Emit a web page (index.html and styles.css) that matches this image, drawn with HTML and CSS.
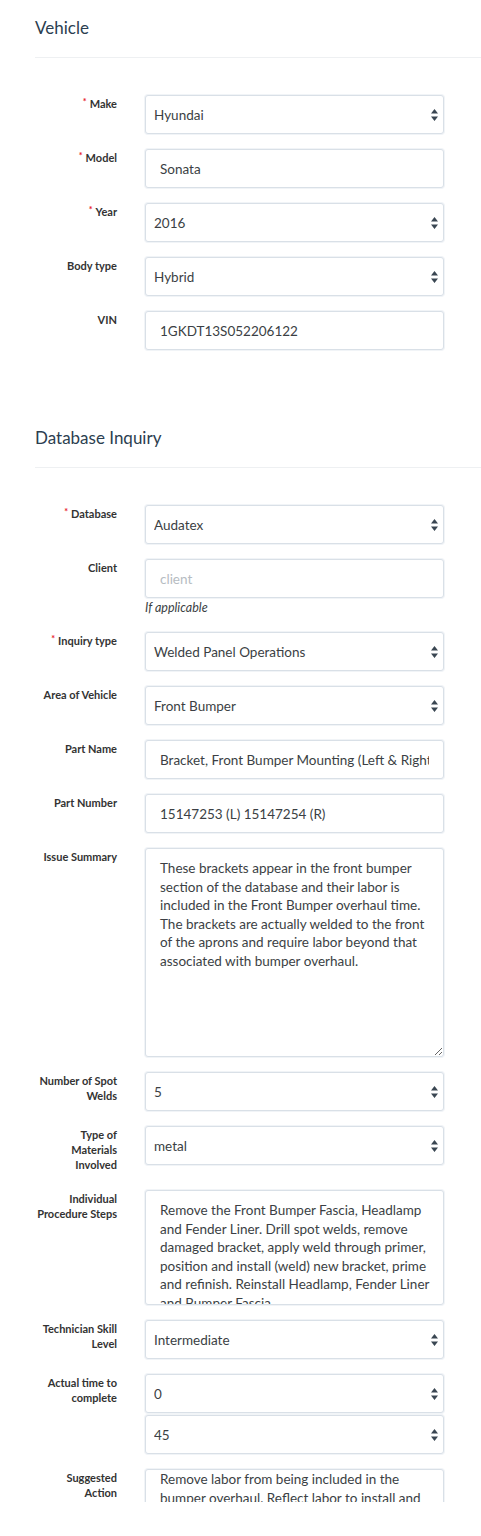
FILE: index.html
```html
<!DOCTYPE html>
<html lang="en">
<head>
    <meta charset="UTF-8">
    <meta name="viewport" content="width=device-width, initial-scale=1.0">
    <title>Vehicle inquiry</title>
    <link rel="stylesheet" href="styles.css">
</head>
<body>
    <div class="page">
        <div class="section">
            <h2 class="section-title">Vehicle</h2>
            <div class="form">
                <div class="form-row">
                    <label class="form-label"><span class="req">*</span>Make</label>
                    <div class="select-box">
                        <select class="control select"><option>Hyundai</option></select>
                        <svg class="caret" width="7" height="12" viewBox="0 0 7 12"><path d="M3.5 0L7 4.6H0z M0 7.4H7L3.5 12z"/></svg>
                    </div>
                </div>
                <div class="form-row">
                    <label class="form-label"><span class="req">*</span>Model</label>
                    <input class="control input" type="text" value="Sonata">
                </div>
                <div class="form-row">
                    <label class="form-label"><span class="req">*</span>Year</label>
                    <div class="select-box">
                        <select class="control select"><option>2016</option></select>
                        <svg class="caret" width="7" height="12" viewBox="0 0 7 12"><path d="M3.5 0L7 4.6H0z M0 7.4H7L3.5 12z"/></svg>
                    </div>
                </div>
                <div class="form-row">
                    <label class="form-label">Body type</label>
                    <div class="select-box">
                        <select class="control select"><option>Hybrid</option></select>
                        <svg class="caret" width="7" height="12" viewBox="0 0 7 12"><path d="M3.5 0L7 4.6H0z M0 7.4H7L3.5 12z"/></svg>
                    </div>
                </div>
                <div class="form-row">
                    <label class="form-label">VIN</label>
                    <input class="control input" type="text" value="1GKDT13S052206122">
                </div>
            </div>
        </div>

        <div class="section">
            <h2 class="section-title">Database Inquiry</h2>
            <div class="form">
                <div class="form-row">
                    <label class="form-label"><span class="req">*</span>Database</label>
                    <div class="select-box">
                        <select class="control select"><option>Audatex</option></select>
                        <svg class="caret" width="7" height="12" viewBox="0 0 7 12"><path d="M3.5 0L7 4.6H0z M0 7.4H7L3.5 12z"/></svg>
                    </div>
                </div>
                <div class="form-row">
                    <label class="form-label">Client</label>
                    <div>
                        <input class="control input" type="text" placeholder="client">
                        <div class="help">If applicable</div>
                    </div>
                </div>
                <div class="form-row">
                    <label class="form-label"><span class="req">*</span>Inquiry type</label>
                    <div class="select-box">
                        <select class="control select"><option>Welded Panel Operations</option></select>
                        <svg class="caret" width="7" height="12" viewBox="0 0 7 12"><path d="M3.5 0L7 4.6H0z M0 7.4H7L3.5 12z"/></svg>
                    </div>
                </div>
                <div class="form-row">
                    <label class="form-label">Area of Vehicle</label>
                    <div class="select-box">
                        <select class="control select"><option>Front Bumper</option></select>
                        <svg class="caret" width="7" height="12" viewBox="0 0 7 12"><path d="M3.5 0L7 4.6H0z M0 7.4H7L3.5 12z"/></svg>
                    </div>
                </div>
                <div class="form-row">
                    <label class="form-label">Part Name</label>
                    <input class="control input" type="text" value="Bracket, Front Bumper Mounting (Left &amp; Right)">
                </div>
                <div class="form-row">
                    <label class="form-label">Part Number</label>
                    <input class="control input" type="text" value="15147253 (L) 15147254 (R)">
                </div>
                <div class="form-row">
                    <label class="form-label">Issue Summary</label>
                    <textarea class="control textarea summary">These brackets appear in the front bumper
section of the database and their labor is
included in the Front Bumper overhaul time.
The brackets are actually welded to the front
of the aprons and require labor beyond that
associated with bumper overhaul.</textarea>
                </div>
                <div class="form-row">
                    <label class="form-label">Number of Spot<br>Welds</label>
                    <div class="select-box">
                        <select class="control select"><option>5</option></select>
                        <svg class="caret" width="7" height="12" viewBox="0 0 7 12"><path d="M3.5 0L7 4.6H0z M0 7.4H7L3.5 12z"/></svg>
                    </div>
                </div>
                <div class="form-row">
                    <label class="form-label">Type of<br>Materials<br>Involved</label>
                    <div class="select-box">
                        <select class="control select"><option>metal</option></select>
                        <svg class="caret" width="7" height="12" viewBox="0 0 7 12"><path d="M3.5 0L7 4.6H0z M0 7.4H7L3.5 12z"/></svg>
                    </div>
                </div>
                <div class="form-row">
                    <label class="form-label">Individual<br>Procedure Steps</label>
                    <textarea class="control textarea steps">Remove the Front Bumper Fascia, Headlamp
and Fender Liner. Drill spot welds, remove
damaged bracket, apply weld through primer,
position and install (weld) new bracket, prime
and refinish. Reinstall Headlamp, Fender Liner
and Bumper Fascia.</textarea>
                </div>
                <div class="form-row">
                    <label class="form-label">Technician Skill<br>Level</label>
                    <div class="select-box">
                        <select class="control select"><option>Intermediate</option></select>
                        <svg class="caret" width="7" height="12" viewBox="0 0 7 12"><path d="M3.5 0L7 4.6H0z M0 7.4H7L3.5 12z"/></svg>
                    </div>
                </div>
                <div class="form-row">
                    <label class="form-label">Actual time to<br>complete</label>
                    <div class="stack">
                        <div class="select-box">
                            <select class="control select"><option>0</option></select>
                            <svg class="caret" width="7" height="12" viewBox="0 0 7 12"><path d="M3.5 0L7 4.6H0z M0 7.4H7L3.5 12z"/></svg>
                        </div>
                        <div class="select-box">
                            <select class="control select"><option>45</option></select>
                            <svg class="caret" width="7" height="12" viewBox="0 0 7 12"><path d="M3.5 0L7 4.6H0z M0 7.4H7L3.5 12z"/></svg>
                        </div>
                    </div>
                </div>
                <div class="form-row">
                    <label class="form-label">Suggested<br>Action</label>
                    <textarea class="control textarea action">Remove labor from being included in the
bumper overhaul. Reflect labor to install and
replace the brackets as a separate operation.</textarea>
                </div>
            </div>
        </div>
    </div>
</body>
</html>
```

FILE: styles.css
```css
body {
    margin: 0;
    background: #fff;
    font-family: Lato, "Open Sans", sans-serif;
    color: #333;
}
.page {
    height: 1502px;
    overflow: hidden;
}
.section {
    margin-bottom: 60px;
}
.section-title {
    margin: 0 0 37px 35px;
    padding: 16px 0 17px;
    font-size: 17px;
    line-height: 24px;
    font-weight: 400;
    color: #2c3e50;
    border-bottom: 1px solid #eef0f2;
}
.form-row {
    display: grid;
    grid-template-columns: 117px 299px;
    column-gap: 28px;
    align-items: start;
    margin-bottom: 15px;
}
.form-label {
    text-align: right;
    font-size: 11px;
    font-weight: 700;
    line-height: 15px;
    padding: 1px 0 3px;
    color: #333;
}
.req {
    color: #e8202a;
    font-size: 9px;
    position: relative;
    top: -3px;
    margin-right: 3px;
}
.control {
    display: block;
    box-sizing: border-box;
    width: 299px;
    margin: 0;
    border: 1px solid #d9e0e7;
    border-radius: 3px;
    box-shadow: 0 0 0 1px #f1f4f7;
    background: #fff;
    font-family: Lato, "Open Sans", sans-serif;
    font-size: 13.5px;
    color: #3b3f44;
    outline: none;
}
.input {
    height: 39px;
    padding: 0 14px;
}
.input::placeholder {
    color: #b6bcc2;
}
.select-box {
    position: relative;
}
.select {
    height: 39px;
    padding: 0 24px 0 8px;
    -webkit-appearance: none;
    appearance: none;
}
.caret {
    position: absolute;
    right: 6px;
    top: 14px;
    fill: #3a4652;
}
.stack {
    display: flex;
    flex-direction: column;
    gap: 2px;
}
.help {
    margin-top: 1px;
    font-size: 12.5px;
    line-height: 18px;
    font-style: italic;
    color: #3b3f44;
}
.textarea {
    padding: 10px 14px;
    line-height: 18.5px;
    white-space: pre;
    overflow: hidden;
}
.summary {
    height: 209px;
}
.steps {
    height: 115px;
    resize: none;
}
.action {
    height: 80px;
    padding-top: 0;
    resize: none;
}
```
